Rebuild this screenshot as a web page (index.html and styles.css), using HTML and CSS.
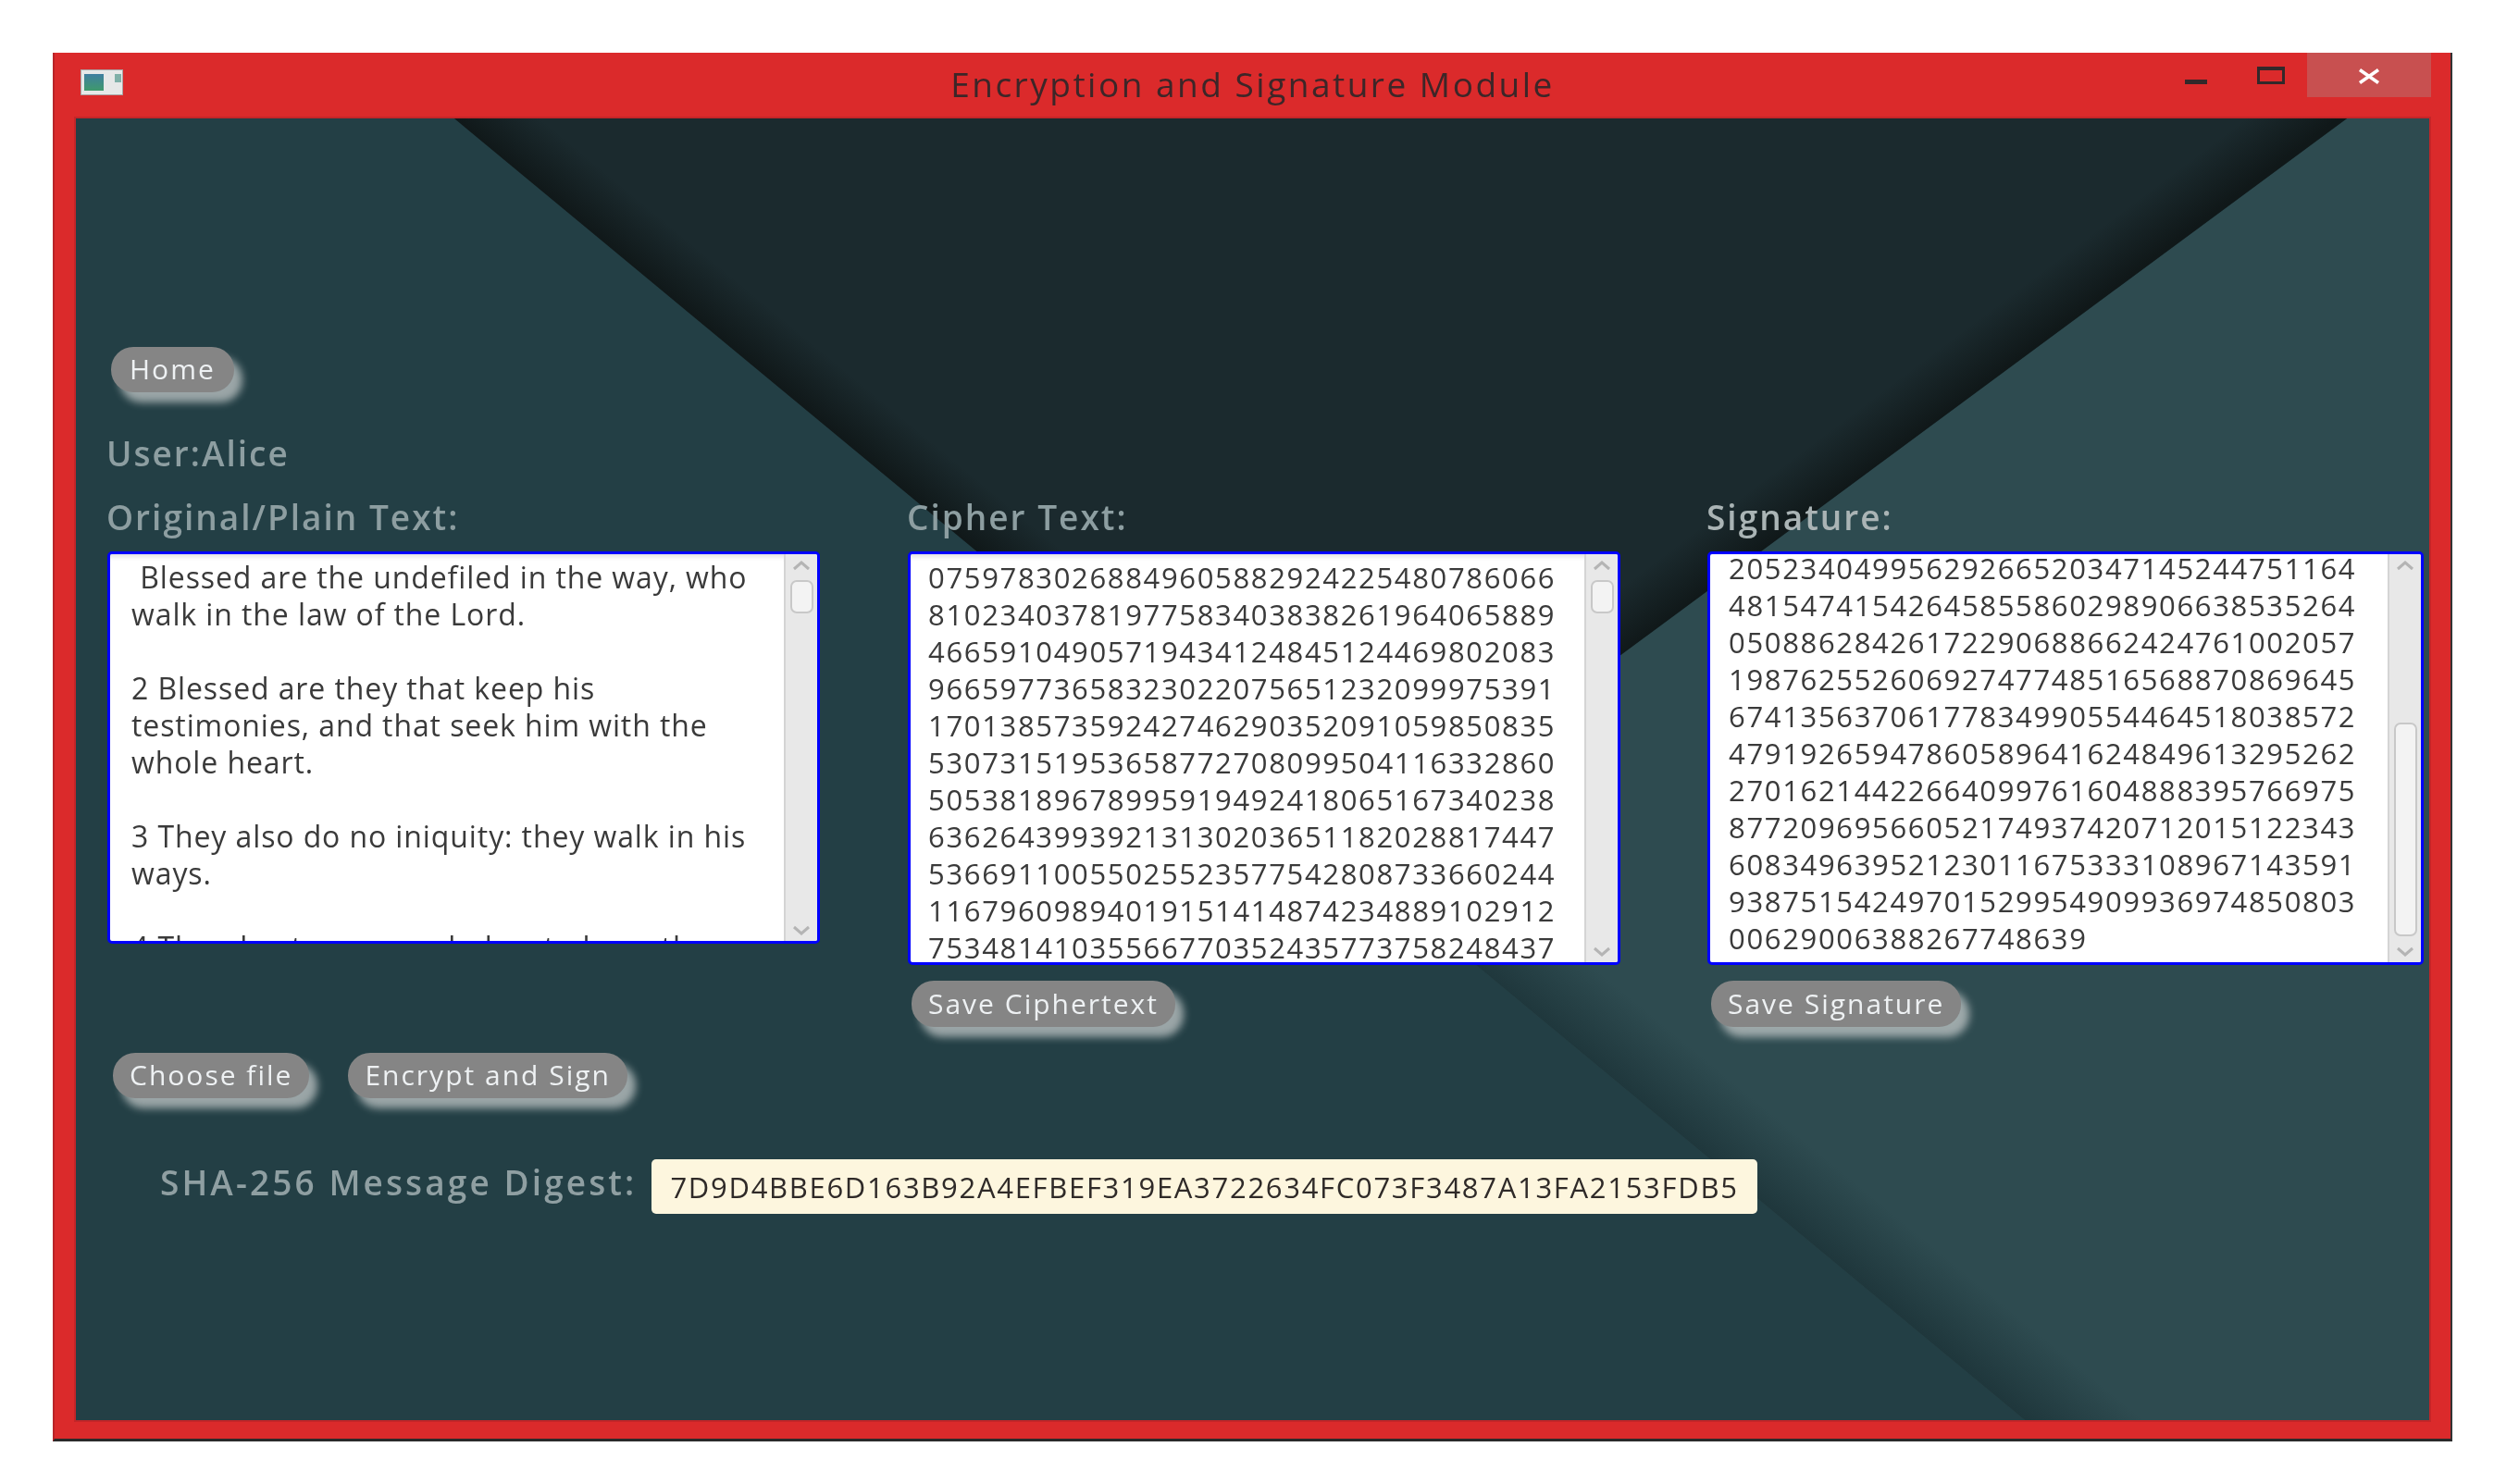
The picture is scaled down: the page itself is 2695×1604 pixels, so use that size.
FILE: index.html
```html
<!DOCTYPE html>
<html lang="en">
  <head>
    <meta charset="UTF-8" />
    <title>Encryption and Signature Module</title>
    <link rel="stylesheet" href="styles.css">
  </head>
  <body>
    <div class="window">

      <div class="title-bar">
        <svg class="app-icon" width="46" height="28" viewBox="0 0 46 28">
          <defs>
            <linearGradient id="icon-pane" x1="0" y1="0" x2="0" y2="1">
              <stop offset="0" stop-color="#3f7fa0"/>
              <stop offset="1" stop-color="#3f9a6c"/>
            </linearGradient>
          </defs>
          <rect width="46" height="28" fill="#e6e8e8" stroke="#a9a5a5" stroke-width="2"/>
          <rect x="4" y="5" width="21" height="18" fill="url(#icon-pane)"/>
          <rect x="37" y="5" width="7" height="9" fill="#7fb0a8"/>
        </svg>
        <span class="title">Encryption and Signature Module</span>
        <div class="win-controls">
          <span class="win-min"></span>
          <span class="win-max"></span>
          <span class="win-close">
            <svg width="24" height="17" viewBox="0 0 24 17">
              <path d="M2 1.5 L22 15.5 M22 1.5 L2 15.5" stroke="#fff" stroke-width="3.6" fill="none"/>
            </svg>
          </span>
        </div>
      </div>

      <div class="content">
        <svg class="backdrop" viewBox="0 0 2543 1407" preserveAspectRatio="none">
          <defs>
            <linearGradient id="edge-left" gradientUnits="userSpaceOnUse" x1="891" y1="399" x2="929" y2="353">
              <stop offset="0" stop-color="#101819"/>
              <stop offset="1" stop-color="#101819" stop-opacity="0"/>
            </linearGradient>
            <linearGradient id="edge-right" gradientUnits="userSpaceOnUse" x1="1913" y1="399" x2="1877" y2="351">
              <stop offset="0" stop-color="#101819"/>
              <stop offset="1" stop-color="#101819" stop-opacity="0"/>
            </linearGradient>
            <linearGradient id="edge-lower" gradientUnits="userSpaceOnUse" x1="1739" y1="1103" x2="1790" y2="1041">
              <stop offset="0" stop-color="#1f373c"/>
              <stop offset="1" stop-color="#1f373c" stop-opacity="0"/>
            </linearGradient>
          </defs>
          <polygon points="2454,0 2543,0 2543,1407 2106,1407 1373,799" fill="#2e4b50"/>
          <polygon points="2454,0 2543,0 2543,1407 2106,1407 1373,799" fill="url(#edge-lower)"/>
          <polygon points="409,0 2454,0 1373,799" fill="#1b2a2e"/>
          <polygon points="409,0 2454,0 1373,799" fill="url(#edge-left)"/>
          <polygon points="409,0 2454,0 1373,799" fill="url(#edge-right)"/>
        </svg>

        <div class="content-inner">
          <button class="btn btn-home">Home</button>
          <div class="label user-label">User:Alice</div>

          <div class="columns">
            <div class="column">
              <div class="label col-label">Original/Plain Text:</div>
              <div class="text-box text-box-short">
                <div class="text-view text-plain"> Blessed are the undefiled in the way, who
walk in the law of the Lord.

2 Blessed are they that keep his
testimonies, and that seek him with the
whole heart.

3 They also do no iniquity: they walk in his
ways.

4 Thou hast commanded us to keep thy</div>
                <div class="scrollbar">
                  <svg class="arrow" width="20" height="12" viewBox="0 0 20 12"><path d="M2 10 L10 3 L18 10" /></svg>
                  <div class="thumb"></div>
                  <svg class="arrow arrow-down" width="20" height="12" viewBox="0 0 20 12"><path d="M2 2 L10 9 L18 2" /></svg>
                </div>
              </div>
              <div class="file-actions">
                <button class="btn">Choose file</button>
                <button class="btn">Encrypt and Sign</button>
              </div>
            </div>

            <div class="column">
              <div class="label col-label">Cipher Text:</div>
              <div class="text-box">
                <div class="text-view text-digits">07597830268849605882924225480786066
81023403781977583403838261964065889
46659104905719434124845124469802083
96659773658323022075651232099975391
17013857359242746290352091059850835
53073151953658772708099504116332860
50538189678995919492418065167340238
63626439939213130203651182028817447
53669110055025523577542808733660244
11679609894019151414874234889102912
75348141035566770352435773758248437</div>
                <div class="scrollbar">
                  <svg class="arrow" width="20" height="12" viewBox="0 0 20 12"><path d="M2 10 L10 3 L18 10" /></svg>
                  <div class="thumb"></div>
                  <svg class="arrow arrow-down" width="20" height="12" viewBox="0 0 20 12"><path d="M2 2 L10 9 L18 2" /></svg>
                </div>
              </div>
              <button class="btn btn-save">Save Ciphertext</button>
            </div>

            <div class="column column-last">
              <div class="label col-label col-label-light">Signature:</div>
              <div class="text-box">
                <div class="text-view text-digits text-scrolled">20523404995629266520347145244751164
48154741542645855860298906638535264
05088628426172290688662424761002057
19876255260692747748516568870869645
67413563706177834990554464518038572
47919265947860589641624849613295262
27016214422664099761604888395766975
87720969566052174937420712015122343
60834963952123011675333108967143591
93875154249701529954909936974850803
00629006388267748639</div>
                <div class="scrollbar">
                  <svg class="arrow" width="20" height="12" viewBox="0 0 20 12"><path d="M2 10 L10 3 L18 10" /></svg>
                  <div class="thumb thumb-long"></div>
                  <svg class="arrow arrow-down" width="20" height="12" viewBox="0 0 20 12"><path d="M2 2 L10 9 L18 2" /></svg>
                </div>
              </div>
              <button class="btn btn-save">Save Signature</button>
            </div>
          </div>

          <div class="digest-row">
            <span class="label digest-label">SHA-256 Message Digest:</span>
            <span class="digest-value">7D9D4BBE6D163B92A4EFBEF319EA3722634FC073F3487A13FA2153FDB5</span>
          </div>
        </div>
      </div>

    </div>
  </body>
</html>
```

FILE: styles.css
```css
* {
  box-sizing: border-box;
}
body {
  margin: 0;
  padding: 57px 45px 46px 57px;
  background-color: white;
  font-family: "Open Sans", "Noto Sans", sans-serif;
}
.window {
  display: flex;
  flex-direction: column;
  height: 1501px;
  background-color: #db2a2b;
  border-left: 2px solid #b92428;
  border-right: 2px solid #333;
  border-bottom: 3px solid #2a2a2a;
  filter: blur(0.6px);
}
.title-bar {
  position: relative;
  display: flex;
  align-items: flex-start;
  justify-content: center;
  height: 69px;
  flex-shrink: 0;
}
.app-icon {
  position: absolute;
  left: 28px;
  top: 18px;
}
.title {
  margin-top: 11px;
  font-size: 37px;
  line-height: 46px;
  letter-spacing: 2.5px;
  color: #3d2628;
}
.win-controls {
  position: absolute;
  right: 21px;
  top: 0;
  display: flex;
}
.win-min {
  width: 24px;
  height: 5px;
  margin-top: 29px;
  margin-right: 54px;
  background-color: #33282a;
}
.win-max {
  width: 30px;
  height: 19px;
  margin-top: 15px;
  margin-right: 24px;
  border: 3px solid #33282a;
  border-top-width: 4px;
}
.win-close {
  display: flex;
  align-items: center;
  justify-content: center;
  width: 134px;
  height: 48px;
  padding-top: 2px;
  background-color: #c85050;
}
.content {
  position: relative;
  flex: 1;
  margin: 0 21px 18px;
  border: 2px solid #c42528;
  background-color: #233f45;
  overflow: hidden;
}
.backdrop {
  position: absolute;
  left: 0;
  top: 0;
  width: 100%;
  height: 100%;
}
.content-inner {
  position: relative;
  padding: 247px 0 0 34px;
}
.label {
  font-size: 37px;
  font-weight: 600;
  line-height: 44px;
  letter-spacing: 2px;
  color: #8d9ea1;
}
.user-label {
  margin-top: 44px;
  margin-left: -1px;
}
.btn {
  display: inline-block;
  height: 49px;
  padding: 0 18px 2px;
  font-family: inherit;
  font-size: 30px;
  letter-spacing: 2px;
  color: #eef1f3;
  background-color: #858585;
  border: 0;
  border-radius: 24px;
  box-shadow: 9px 11px 9px rgba(195, 200, 200, 0.75);
}
.btn-home {
  display: block;
  margin-left: 4px;
  padding: 0 20px 2px;
}
.btn-save {
  margin-top: 17px;
  margin-left: 4px;
  height: 50px;
}
.columns {
  display: grid;
  grid-template-columns: 770px 770px 773px;
  column-gap: 95px;
  margin-top: 25px;
}
.column-last {
  margin-left: -1px;
}
.col-label {
  margin-bottom: 15px;
  margin-left: -1px;
}
.col-label-light {
  color: #aab4b5;
}
.text-box {
  display: flex;
  height: 447px;
  background-color: white;
  border: 3px solid #0000ff;
  border-radius: 5px;
  overflow: hidden;
}
.text-box-short {
  height: 424px;
}
.text-view {
  flex: 1;
  min-width: 0;
  padding-top: 5px;
  padding-left: 23px;
  font-size: 31px;
  line-height: 40px;
  white-space: pre;
  color: #3a3a3a;
  overflow: hidden;
  box-shadow: inset 0 8px 6px -6px #d8d8d8;
}
.text-plain {
  font-size: 32px;
  letter-spacing: 0.9px;
}
.text-digits {
  padding-left: 19px;
  letter-spacing: 1.65px;
}
.text-scrolled {
  padding-top: 0;
  padding-left: 20px;
  margin-top: -5px;
}
.scrollbar {
  position: relative;
  display: flex;
  flex-direction: column;
  align-items: center;
  width: 36px;
  flex-shrink: 0;
  padding-top: 6px;
  background-color: #e8e8e8;
  border-left: 2px solid #d4d4d4;
}
.arrow {
  flex-shrink: 0;
}
.arrow path {
  fill: none;
  stroke: #b4b4b4;
  stroke-width: 3;
}
.arrow-down {
  margin-top: auto;
  margin-bottom: 5px;
}
.thumb {
  width: 25px;
  height: 36px;
  margin-top: 10px;
  background-color: #f3f3f3;
  border: 2px solid #c8c8c8;
  border-radius: 7px;
}
.thumb-long {
  height: 231px;
  margin-top: 164px;
}
.file-actions {
  display: flex;
  gap: 42px;
  margin-top: 118px;
  margin-left: 6px;
}
.digest-row {
  display: flex;
  align-items: center;
  gap: 17px;
  margin-top: 66px;
  padding-left: 57px;
}
.digest-label {
  margin-bottom: 10px;
  width: 514px;
  white-space: nowrap;
  letter-spacing: 3.1px;
  color: #8f9fa2;
}
.digest-value {
  display: flex;
  align-items: center;
  justify-content: center;
  width: 1195px;
  height: 59px;
  font-size: 31px;
  letter-spacing: 1.7px;
  color: #2f2a28;
  background-color: #fdf6de;
  border-radius: 5px;
}
```
